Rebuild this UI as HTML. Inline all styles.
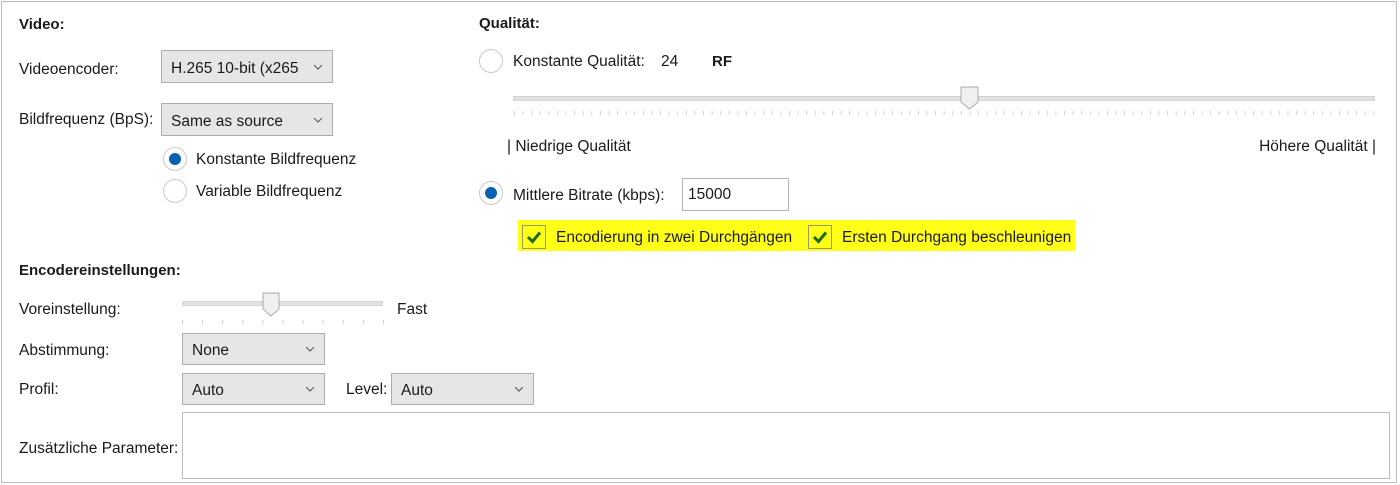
<!DOCTYPE html>
<html><head><meta charset="utf-8"><style>
body{margin:0;width:1400px;height:485px;background:#fff;position:relative;overflow:hidden;font-family:"Liberation Sans",sans-serif;font-size:15.5px;color:#1a1a1a}
.a{position:absolute;white-space:nowrap;line-height:17px}
.b{font-weight:bold;font-size:15px}
.sel{position:absolute;box-sizing:border-box;background:#e6e6e6;border:1px solid #adadad;font-size:15.5px;padding-left:9px;white-space:nowrap}
.sel span{position:absolute;left:9px;top:50%;transform:translateY(-40%);line-height:18px}
.sel:after{content:"";position:absolute;right:11px;top:50%;width:5px;height:5px;border-right:1.3px solid #555;border-bottom:1.3px solid #555;transform:translateY(-75%) rotate(45deg)}
.rad{position:absolute;box-sizing:border-box;width:24px;height:24px;border-radius:50%;border:1px solid #c8c8c8;background:#fff}
.rad.on:after{content:"";position:absolute;left:5px;top:5px;width:12px;height:12px;border-radius:50%;background:#0860b0}
.cb{position:absolute;box-sizing:border-box;width:24px;height:24px;border:1px solid #9a9a5a;background:#ffff1a}
.track{position:absolute;height:4px;background:#e2e2e2;border:1px solid #d4d4d4;box-sizing:border-box}
.ticks{position:absolute;height:4px;background-image:repeating-linear-gradient(90deg,#d0d0d0 0 1px,transparent 1px 100%)}
</style></head><body>
<div style="position:absolute;left:1px;top:1px;width:1396px;height:482px;box-sizing:border-box;border:1px solid #bdbdbd"></div>

<div class="a b" style="left:19px;top:16px">Video:</div>
<div class="a" style="left:19px;top:61px">Videoencoder:</div>
<div class="sel" style="left:161px;top:50px;width:172px;height:33px"><span>H.265 10-bit (x265</span></div>
<div class="a" style="left:19px;top:111px">Bildfrequenz (BpS):</div>
<div class="sel" style="left:161px;top:103px;width:172px;height:33px"><span>Same as source</span></div>
<div class="rad on" style="left:163px;top:147px"></div>
<div class="a" style="left:196px;top:151px">Konstante Bildfrequenz</div>
<div class="rad" style="left:163px;top:179px"></div>
<div class="a" style="left:196px;top:183px">Variable Bildfrequenz</div>

<div class="a b" style="left:479px;top:15px">Qualität:</div>
<div class="rad" style="left:479px;top:49px"></div>
<div class="a" style="left:513px;top:53px">Konstante Qualität:</div>
<div class="a" style="left:661px;top:53px">24</div>
<div class="a b" style="left:712px;top:53px">RF</div>
<div class="track" style="left:513px;top:96px;width:862px;height:5px"></div>
<div class="ticks" style="left:514px;top:111px;width:862px;background-size:8.6px 4px"></div>
<svg style="position:absolute;left:960px;top:86px" width="19" height="24"><path d="M1 1H18V16L9.5 23L1 16Z" fill="#f0f0f0" stroke="#aaa"/></svg>
<div class="a" style="left:507px;top:138px">| Niedrige Qualität</div>
<div class="a" style="right:24px;top:138px">Höhere Qualität |</div>
<div class="rad on" style="left:479px;top:181px"></div>
<div class="a" style="left:513px;top:187px">Mittlere Bitrate (kbps):</div>
<div style="position:absolute;left:682px;top:178px;width:107px;height:33px;box-sizing:border-box;border:1px solid #b5b5b5;padding-left:5px;line-height:31px;font-size:15.5px">15000</div>
<div style="position:absolute;left:518px;top:220px;width:557px;height:31px;background:#ffff1a"></div>
<div class="cb" style="left:522px;top:225px"></div>
<svg style="position:absolute;left:522px;top:225px" width="24" height="24"><path d="M6 12L10.5 16.5L18 7.5" fill="none" stroke="#1a6a1a" stroke-width="3"/></svg>
<div class="a" style="left:556px;top:229px">Encodierung in zwei Durchgängen</div>
<div class="cb" style="left:808px;top:225px"></div>
<svg style="position:absolute;left:808px;top:225px" width="24" height="24"><path d="M6 12L10.5 16.5L18 7.5" fill="none" stroke="#1a6a1a" stroke-width="3"/></svg>
<div class="a" style="left:842px;top:229px">Ersten Durchgang beschleunigen</div>

<div class="a b" style="left:19px;top:262px">Encodereinstellungen:</div>
<div class="a" style="left:19px;top:301px">Voreinstellung:</div>
<div class="track" style="left:182px;top:301px;width:201px;height:5px"></div>
<div class="ticks" style="left:182px;top:320px;width:203px;background-size:20.1px 4px"></div>
<svg style="position:absolute;left:262px;top:292px" width="18" height="25"><path d="M1 1H17V17L9 24L1 17Z" fill="#f0f0f0" stroke="#aaa"/></svg>
<div class="a" style="left:397px;top:301px">Fast</div>
<div class="a" style="left:19px;top:342px">Abstimmung:</div>
<div class="sel" style="left:182px;top:333px;width:143px;height:32px"><span>None</span></div>
<div class="a" style="left:19px;top:381px">Profil:</div>
<div class="sel" style="left:182px;top:373px;width:143px;height:32px"><span>Auto</span></div>
<div class="a" style="left:346px;top:381px">Level:</div>
<div class="sel" style="left:391px;top:373px;width:143px;height:32px"><span>Auto</span></div>
<div class="a" style="left:19px;top:440px">Zusätzliche Parameter:</div>
<div style="position:absolute;left:182px;top:412px;width:1208px;height:67px;box-sizing:border-box;border:1px solid #bdbdbd"></div>
</body></html>
